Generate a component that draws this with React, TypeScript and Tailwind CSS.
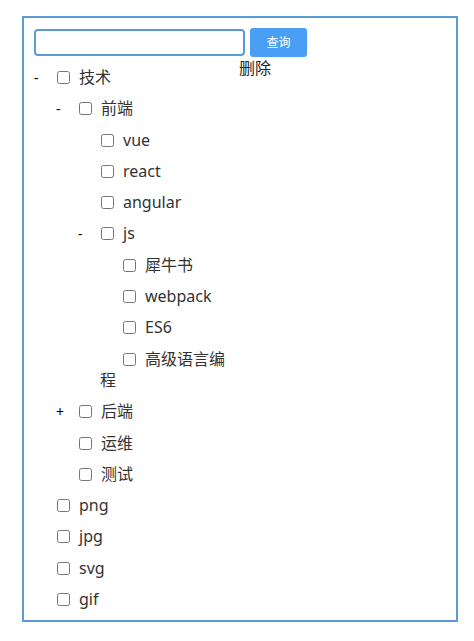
import React from 'react';

type Node = {
  label: string;
  toggle?: '-' | '+';
  children?: Node[];
};

const treeData: Node[] = [
  {
    label: '技术',
    toggle: '-',
    children: [
      {
        label: '前端',
        toggle: '-',
        children: [
          { label: 'vue' },
          { label: 'react' },
          { label: 'angular' },
          {
            label: 'js',
            toggle: '-',
            children: [
              { label: '犀牛书' },
              { label: 'webpack' },
              { label: 'ES6' },
              { label: '高级语言编程' },
            ],
          },
        ],
      },
      { label: '后端', toggle: '+' },
      { label: '运维' },
      { label: '测试' },
    ],
  },
  { label: 'png' },
  { label: 'jpg' },
  { label: 'svg' },
  { label: 'gif' },
];

const TreeItem: React.FC<{ node: Node }> = ({ node }) => (
  <li className="py-[5px] leading-[21.3px]">
    <span className="inline-block w-[23px] text-[14px] text-black">{node.toggle ?? ''}</span>
    <input
      type="checkbox"
      className="w-[13px] h-[13px] mr-[9px] align-[-1px] accent-[#409eff]"
    />
    <span>{node.label}</span>
    {node.children && node.toggle === '-' && (
      <ul className="pl-[22px] pt-[5px] -mb-[5px]">
        {node.children.map((child, i) => (
          <TreeItem key={i} node={child} />
        ))}
      </ul>
    )}
  </li>
);

export default function App() {
  return (
    <div
      className="bg-white min-h-[641px] pt-[16px] pl-[22px] text-[16px] text-[#333]"
      style={{ fontFamily: '"Noto Sans", "Noto Sans CJK SC", sans-serif' }}
    >
      <div className="w-[436px] h-[606px] border-2 border-[#5b9bd9] px-[10px] pt-[10px]">
        {/* Search bar */}
        <div className="flex items-center gap-[5px]">
          <input
            type="text"
            className="w-[211px] h-[27px] border-2 border-[#5b9bd9] rounded-[4px] outline-none px-2"
          />
          <button className="w-[57px] h-[29px] bg-[#4a9ff5] rounded-[3px] text-white text-[12px]">
            查询
          </button>
        </div>

        {/* Tree + delete */}
        <div className="flex items-start">
          <ul className="w-[205px] pt-[5px]">
            {treeData.map((node, i) => (
              <TreeItem key={i} node={node} />
            ))}
          </ul>
          <span className="mt-[1px] leading-[21px] text-[#222]">删除</span>
        </div>
      </div>
    </div>
  );
}
